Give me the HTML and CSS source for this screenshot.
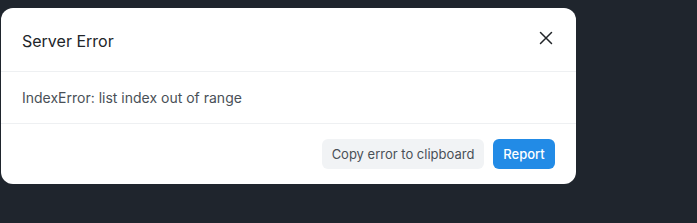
FILE: index.html
```html
<!DOCTYPE html>
<html>
<head>
<meta charset="utf-8">
<link rel="stylesheet" href="styles.css">
</head>
<body>
<div class="modal">
  <div class="header">
    <h2 class="title">Server Error</h2>
    <button class="close" aria-label="Close">
      <svg width="14" height="14" viewBox="0 0 14 14"><path d="M1.5 1.5L12.5 12.5M12.5 1.5L1.5 12.5" stroke="#212529" stroke-width="1.5" stroke-linecap="round"/></svg>
    </button>
  </div>
  <div class="body">IndexError: list index out of range</div>
  <div class="footer">
    <button class="btn btn-light">Copy error to clipboard</button>
    <button class="btn btn-primary">Report</button>
  </div>
</div>
</body>
</html>
```
FILE: styles.css
```css
html, body { margin: 0; padding: 0; }
body {
  background: #1f252d;
  font-family: Inter, "Noto Sans", sans-serif;
  padding: 8px 0 0 1px;
  height: 223px;
  box-sizing: border-box;
}
.modal {
  width: 575px;
  height: 176px;
  background: #fff;
  border-radius: 12px;
  display: flex;
  flex-direction: column;
  overflow: hidden;
}
.header {
  height: 63px;
  border-bottom: 1px solid #eef0f2;
  display: flex;
  align-items: center;
  justify-content: space-between;
  padding: 0 23px 0 21px;
}
.title {
  margin: 0;
  font-size: 16px;
  font-weight: 400;
  color: #212529;
  position: relative;
  top: 1px;
}
.close {
  border: 0;
  background: none;
  padding: 0;
  width: 14px;
  height: 14px;
  display: flex;
  position: relative;
  top: -2px;
}
.body {
  height: 51px;
  border-bottom: 1px solid #eef0f2;
  display: flex;
  align-items: center;
  padding: 0 21px;
  font-size: 14px;
  color: #495057;
}
.footer {
  flex: 1;
  display: flex;
  align-items: center;
  justify-content: flex-end;
  gap: 9px;
  padding: 0 21px 1px;
}
.btn {
  height: 30px;
  border: 0;
  border-radius: 6px;
  font-family: Inter, "Noto Sans", sans-serif;
  font-size: 13px;
  padding: 0;
  white-space: nowrap;
}
.btn-light {
  background: #f1f3f5;
  color: #495057;
  width: 162px;
}
.btn-primary {
  background: #228be6;
  color: #fff;
  font-weight: 500;
  width: 62px;
}
```
